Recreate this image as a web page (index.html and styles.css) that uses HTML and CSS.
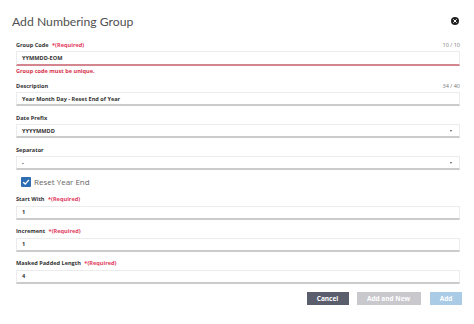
FILE: index.html
```html
<!DOCTYPE html>
<html>
<head>
    <title>Add Numbering Group</title>
    <link rel="stylesheet" href="styles.css">
</head>
<body>
    <div class="modal">
        <div class="modal_header">
            <h1>Add Numbering Group</h1>
            <button class="close_btn" type="button" aria-label="Close">
                <svg width="8" height="8" viewBox="0 0 8 8">
                    <circle cx="4" cy="4" r="4" fill="#222"/>
                    <path d="M2.6 2.6 L5.4 5.4 M5.4 2.6 L2.6 5.4" stroke="#fff" stroke-width="1" stroke-linecap="round"/>
                </svg>
            </button>
        </div>

        <form class="modal_body">
            <div class="field field_first">
                <div class="label_row">
                    <label>Group Code <span class="required">*(Required)</span></label>
                    <span class="counter">10 / 10</span>
                </div>
                <div class="input input_error">YYMMDD-EOM</div>
                <div class="error_text">Group code must be unique.</div>
            </div>

            <div class="field">
                <div class="label_row">
                    <label>Description</label>
                    <span class="counter">34 / 40</span>
                </div>
                <div class="input">Year Month Day - Reset End of Year</div>
            </div>

            <div class="field">
                <div class="label_row">
                    <label>Date Prefix</label>
                </div>
                <div class="input select">YYYYMMDD<span class="arrow"></span></div>
            </div>

            <div class="field">
                <div class="label_row">
                    <label>Separator</label>
                </div>
                <div class="input select">-<span class="arrow"></span></div>
            </div>

            <div class="check_row">
                <svg width="10" height="10" viewBox="0 0 10 10">
                    <rect x="0" y="0" width="10" height="10" rx="1" fill="#2d6db3"/>
                    <path d="M2.2 5.2 L4.2 7.1 L8 2.9" stroke="#fff" stroke-width="1.4" fill="none"/>
                </svg>
                <span>Reset Year End</span>
            </div>

            <div class="field">
                <div class="label_row">
                    <label>Start With <span class="required">*(Required)</span></label>
                </div>
                <div class="input">1</div>
            </div>

            <div class="field">
                <div class="label_row">
                    <label>Increment <span class="required">*(Required)</span></label>
                </div>
                <div class="input">1</div>
            </div>

            <div class="field">
                <div class="label_row">
                    <label>Masked Padded Length <span class="required">*(Required)</span></label>
                </div>
                <div class="input">4</div>
            </div>

            <div class="button_row">
                <button type="button" class="btn btn_cancel">Cancel</button>
                <button type="button" class="btn btn_new">Add and New</button>
                <button type="submit" class="btn btn_add">Add</button>
            </div>
        </form>
    </div>
</body>
</html>
```

FILE: styles.css
```css
body {
    margin: 0;
    background: #fff;
    font-family: "Open Sans", "Liberation Sans", sans-serif;
    color: #333;
}
.modal {
    width: 474px;
    height: 324px;
    box-sizing: border-box;
}
.modal_header {
    display: flex;
    justify-content: space-between;
    align-items: center;
    height: 41px;
    padding: 0 15px 0 12px;
}
.modal_header h1 {
    margin: 2px 0 0 0;
    font-family: Lato, "Open Sans", sans-serif;
    font-size: 12.2px;
    font-weight: 400;
    color: #505050;
}
.close_btn {
    border: none;
    background: none;
    padding: 0;
    width: 8px;
    height: 8px;
    display: flex;
}
.modal_body {
    padding: 0 14px 0 16px;
}
.field {
    margin-bottom: 8px;
}
.field_first {
    margin-bottom: 7px;
}
.label_row {
    display: flex;
    justify-content: space-between;
    align-items: center;
    height: 7px;
    margin-bottom: 3px;
}
label {
    font-size: 5.6px;
    font-weight: 700;
    color: #333;
}
.required {
    color: #e23a5c;
    margin-left: 2px;
}
.counter {
    font-size: 5.5px;
    color: #777;
}
.input {
    position: relative;
    height: 14px;
    box-sizing: border-box;
    border: 1px solid #ececec;
    border-bottom: 2px solid #cbcbcb;
    padding-left: 5px;
    display: flex;
    align-items: center;
    font-size: 5.6px;
    font-weight: 700;
    color: #333;
}
.input_error {
    height: 15px;
    border-bottom-color: #d4868f;
}
.error_text {
    margin-top: 2px;
    height: 7px;
    line-height: 7px;
    font-size: 5.6px;
    font-weight: 700;
    color: #d8324a;
}
.arrow {
    position: absolute;
    right: 7px;
    top: 5px;
    border-left: 1.5px solid transparent;
    border-right: 1.5px solid transparent;
    border-top: 2px solid #555;
}
.check_row {
    display: flex;
    align-items: center;
    gap: 3px;
    margin: -1.5px 0 9px 5px;
    height: 10px;
}
.check_row span {
    font-size: 8px;
    color: #666;
}
.button_row {
    display: flex;
    justify-content: flex-end;
    gap: 8px;
    margin: 3.5px -2px 0 0;
}
.btn {
    height: 13px;
    border: none;
    padding: 0;
    font-family: inherit;
    font-size: 6.5px;
    font-weight: 700;
    color: #fff;
}
.btn_cancel {
    width: 42px;
    background: #5b5e6c;
}
.btn_new {
    width: 64px;
    background: #c9c9cd;
}
.btn_add {
    width: 32px;
    margin-left: 1.5px;
    background: #a9cbe6;
}
```
